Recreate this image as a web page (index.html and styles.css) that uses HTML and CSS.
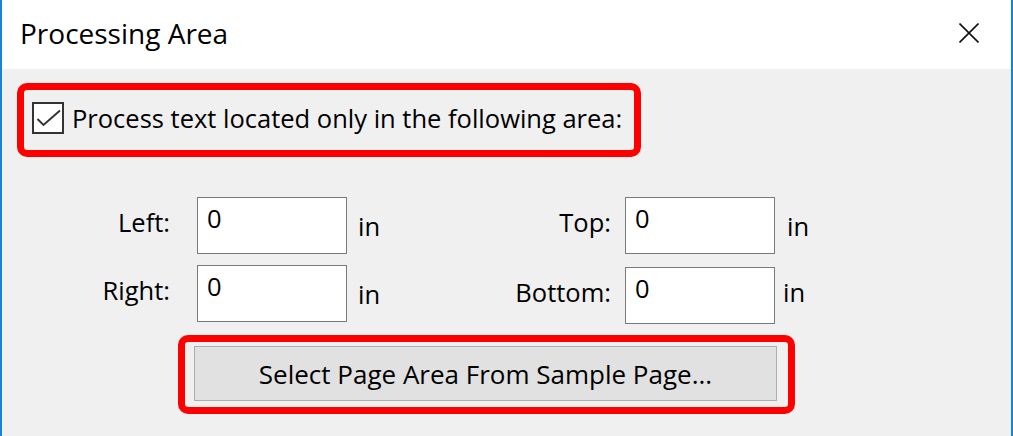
FILE: index.html
```html
<!DOCTYPE html>
<html>
<head>
<meta charset="utf-8">
<title>Processing Area</title>
<link rel="stylesheet" href="styles.css">
</head>
<body>
<div class="window">
  <div class="titlebar">
    <div class="title">Processing Area</div>
    <button class="close" aria-label="Close">
      <svg width="20" height="20" viewBox="0 0 20 20"><path d="M0.5 0.5 L19.5 19.5 M19.5 0.5 L0.5 19.5" stroke="#111" stroke-width="1.6" fill="none"/></svg>
    </button>
  </div>
  <div class="content">
    <div class="highlight check-group">
      <span class="checkbox">
        <svg width="28" height="28" viewBox="0 0 28 28"><path d="M3.5 15 L9.5 21 L26 6.5" stroke="#333" stroke-width="2" fill="none"/></svg>
      </span>
      <span class="check-label">Process text located only in the following area:</span>
    </div>
    <div class="fields">
      <div class="field-grid left-grid">
        <span class="lbl">Left:</span>
        <input class="num" type="text" value="0">
        <span class="unit">in</span>
        <span class="lbl">Right:</span>
        <input class="num" type="text" value="0">
        <span class="unit">in</span>
      </div>
      <div class="field-grid right-grid">
        <span class="lbl">Top:</span>
        <input class="num" type="text" value="0">
        <span class="unit">in</span>
        <span class="lbl">Bottom:</span>
        <input class="num" type="text" value="0">
        <span class="unit unit-low">in</span>
      </div>
    </div>
    <div class="highlight button-group">
      <button class="sample-btn">Select Page Area From Sample Page...</button>
    </div>
  </div>
</div>
</body>
</html>
```
FILE: styles.css
```css
* { box-sizing: border-box; }
html, body { margin: 0; padding: 0; background: #f0f0f0; }
body {
  font-family: "Open Sans", "Noto Sans", sans-serif;
  color: #000;
}
.window {
  width: 1013px;
  height: 436px;
  border-left: 2px solid #1883d7;
  border-right: 2px solid #1883d7;
  background: #f0f0f0;
  overflow: hidden;
}
.titlebar {
  height: 69px;
  background: #fff;
  display: flex;
  justify-content: space-between;
  align-items: flex-start;
  padding: 0 32px 0 18px;
}
.title {
  font-size: 28px;
  line-height: 38px;
  margin-top: 14px;
}
.close {
  margin-top: 23px;
  width: 20px;
  height: 20px;
  padding: 0;
  border: 0;
  background: transparent;
  display: block;
}
.close svg { display: block; }
.content {
  padding: 14px 0 0 15px;
}
.highlight {
  border: 7px solid #ff0000;
  border-radius: 10px;
}
.check-group {
  display: inline-flex;
  align-items: center;
  gap: 8px;
  padding: 12px 12px 16px 8px;
}
.checkbox {
  width: 32px;
  height: 32px;
  border: 2px solid #333;
  background: #fff;
  display: flex;
  align-items: center;
  justify-content: center;
}
.checkbox svg { display: block; }
.check-label {
  font-size: 25.5px;
  line-height: 30px;
}
.fields {
  margin-top: 40px;
  padding-left: 63px;
  display: grid;
  grid-template-columns: 420px auto;
}
.field-grid {
  display: grid;
  align-items: start;
  font-size: 25.5px;
  line-height: 30px;
}
.left-grid {
  grid-template-columns: 117px 150px auto;
  row-gap: 9px;
}
.right-grid {
  grid-template-columns: 125px 150px auto;
  row-gap: 13px;
}
.lbl {
  text-align: right;
  margin-top: 10px;
}
.left-grid .lbl { padding-right: 27px; }
.right-grid .lbl { padding-right: 14px; }
.num {
  width: 150px;
  height: 57px;
  margin: 0;
  border: 1px solid #7a7a7a;
  background: #fff;
  font: inherit;
  line-height: 30px;
  padding: 5px 9px 20px;
  color: #000;
  outline: none;
}
.unit { margin-top: 14px; }
.left-grid .unit { margin-left: 11px; }
.right-grid .unit { margin-left: 12px; }
.right-grid .unit-low { margin-left: 8px; margin-top: 10px; }
.button-group {
  display: inline-block;
  margin: 11px 0 0 161px;
  padding: 4px 11px 6px 9px;
}
.sample-btn {
  display: block;
  width: 583px;
  height: 55px;
  margin: 0;
  padding: 0;
  background: #e1e1e1;
  border: 1px solid #adadad;
  font-family: "Open Sans", "Noto Sans", sans-serif;
  font-size: 26px;
  line-height: 30px;
  color: #000;
}
```
